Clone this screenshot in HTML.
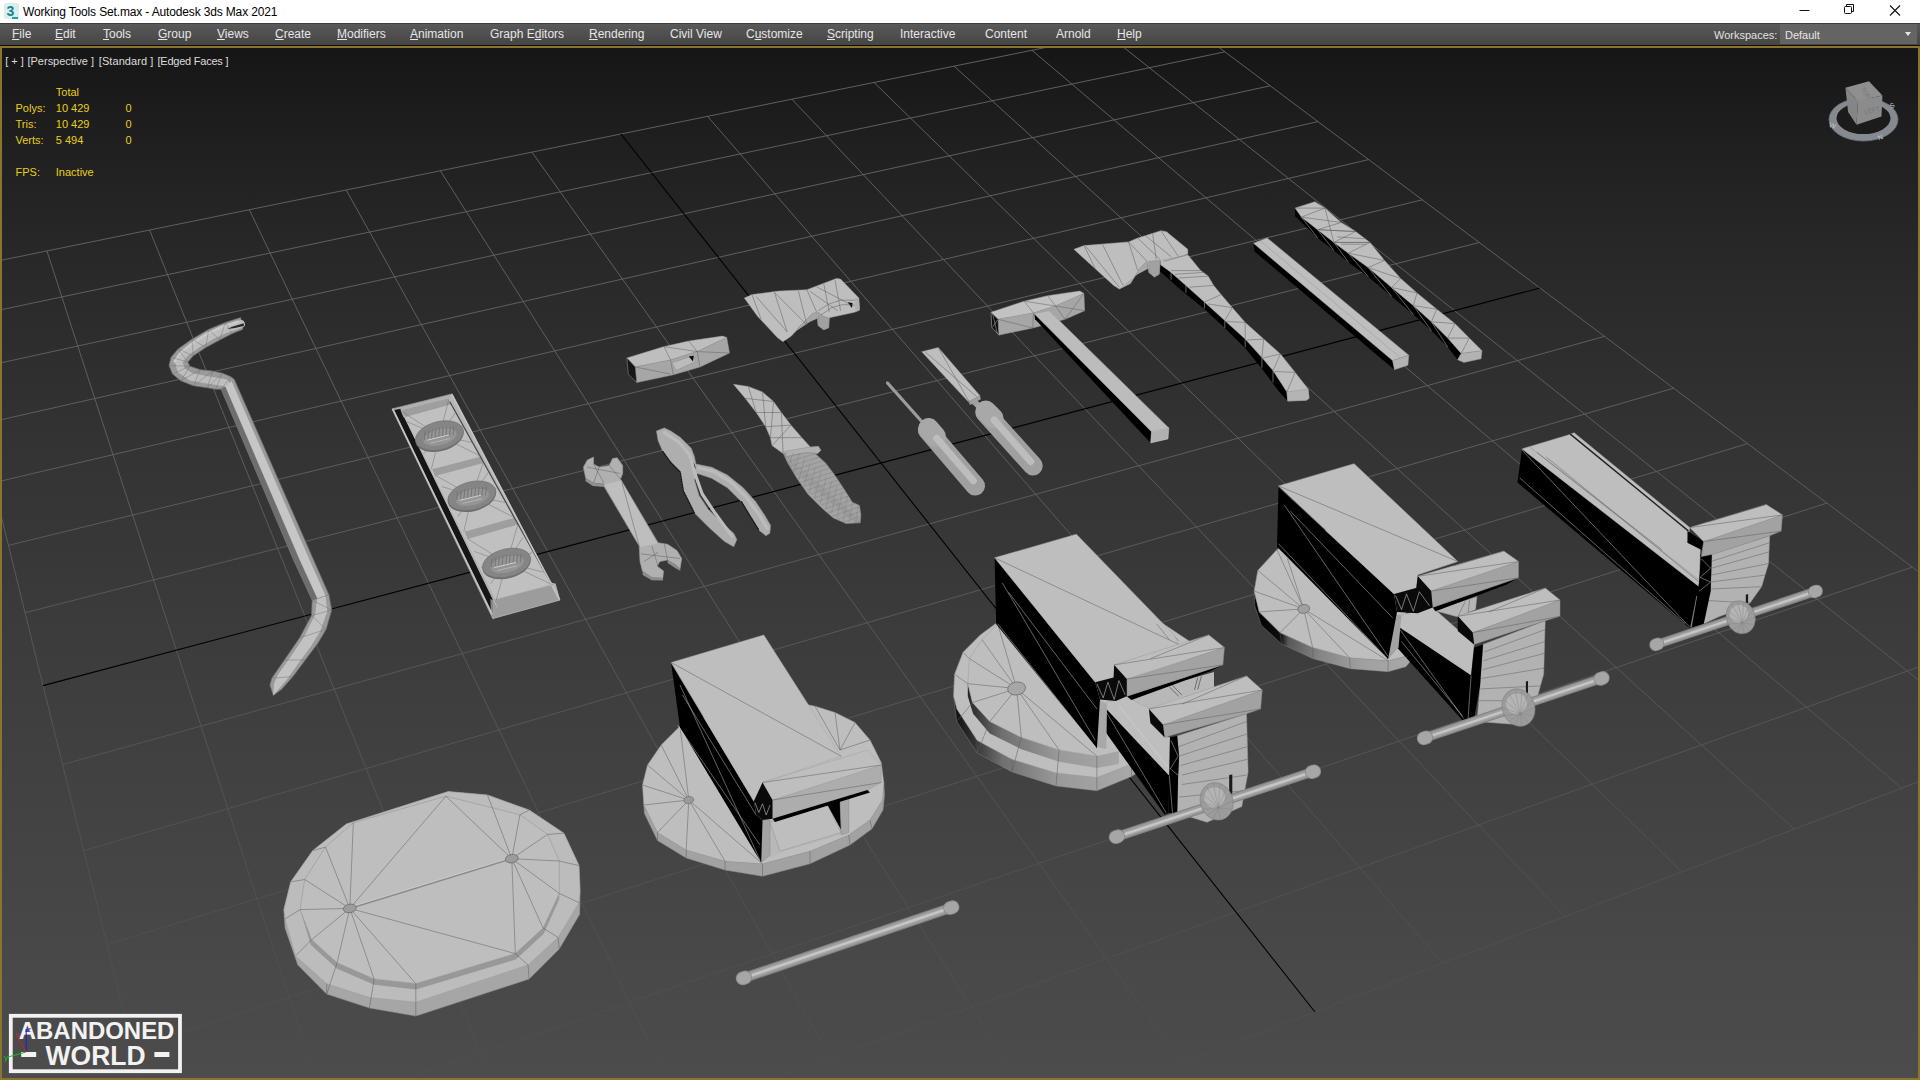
<!DOCTYPE html>
<html><head><meta charset="utf-8"><title>Working Tools Set.max - Autodesk 3ds Max 2021</title>
<style>
html,body{margin:0;padding:0;background:#fff;overflow:hidden}
body{width:1920px;height:1080px;position:relative;font-family:"Liberation Sans",sans-serif}
#title{position:absolute;left:0;top:0;width:1920px;height:23px;background:#fff;color:#000;font-size:12px}
#title .t{position:absolute;left:23px;top:5px;white-space:nowrap;letter-spacing:-0.15px}
#menu{position:absolute;left:0;top:23px;width:1920px;height:22px;background:linear-gradient(#3c3c3c 0,#3c3c3c 1px,#595959 1px,#464646 21px,#45484a 22px);border-bottom:1px solid #140e02;color:#e6e6e6;font-size:12px}
.mi{position:absolute;top:4px;white-space:nowrap}
.mi u{text-decoration:underline;text-underline-offset:1px}
#ws{position:absolute;left:1714px;top:6px;font-size:11px;color:#e0e0e0}
#dd{position:absolute;left:1780px;top:1px;width:137px;height:20px;background:#646464;font-size:11px;color:#e6e6e6}
#dd span{position:absolute;left:5px;top:5px}
#dd i{position:absolute;right:6px;top:8px;width:0;height:0;border-left:3.5px solid transparent;border-right:3.5px solid transparent;border-top:4.5px solid #e8e8e8}
#vp{position:absolute;left:0;top:46px;width:1920px;height:1034px;background:#8a752c}
#vp svg{position:absolute;left:0;top:-46px}
.lbl{position:absolute;white-space:nowrap;font-size:11px}
</style></head><body>
<div id="title">
<svg width="23" height="23" style="position:absolute;left:0;top:0"><rect x="4" y="3" width="15" height="16" rx="2" fill="#d9eeee"/><text x="6.5" y="16" font-family="Liberation Sans, sans-serif" font-weight="bold" font-size="14" fill="#17848c">3</text><rect x="12" y="17" width="6" height="2" fill="#19a3a3"/></svg>
<span class="t">Working Tools Set.max - Autodesk 3ds Max 2021</span>
<svg width="140" height="23" style="position:absolute;left:1780px;top:0" fill="none" stroke="#111" stroke-width="1"><path d="M19.5 10.5h10"/><rect x="64.5" y="6.5" width="7" height="7" rx="1"/><path d="M66.5 6.5v-2h7v7h-2"/><path d="M110 5.5l10 10M120 5.5l-10 10" stroke-width="1.1"/></svg>
</div>
<div id="menu"><span class="mi" style="left:12px"><u>F</u>ile</span><span class="mi" style="left:55px"><u>E</u>dit</span><span class="mi" style="left:103px"><u>T</u>ools</span><span class="mi" style="left:158px"><u>G</u>roup</span><span class="mi" style="left:217px"><u>V</u>iews</span><span class="mi" style="left:275px"><u>C</u>reate</span><span class="mi" style="left:337px"><u>M</u>odifiers</span><span class="mi" style="left:410px"><u>A</u>nimation</span><span class="mi" style="left:490px">Graph E<u>d</u>itors</span><span class="mi" style="left:589px"><u>R</u>endering</span><span class="mi" style="left:670px">Civil View</span><span class="mi" style="left:746px">C<u>u</u>stomize</span><span class="mi" style="left:827px"><u>S</u>cripting</span><span class="mi" style="left:900px">Interactive</span><span class="mi" style="left:985px">Content</span><span class="mi" style="left:1056px">Arnold</span><span class="mi" style="left:1117px"><u>H</u>elp</span><span id="ws">Workspaces:</span><div id="dd"><span>Default</span><i></i></div></div>
<div id="vp">
<svg width="1920" height="1080" viewBox="0 0 1920 1080" font-family="Liberation Sans, sans-serif">
<defs>
<linearGradient id="bg" x1="0" y1="0" x2="0" y2="1"><stop offset="0" stop-color="#161616"/><stop offset="0.05" stop-color="#1b1b1b"/><stop offset="0.1" stop-color="#202020"/><stop offset="0.15" stop-color="#242424"/><stop offset="0.2" stop-color="#282828"/><stop offset="0.25" stop-color="#2b2b2b"/><stop offset="0.3" stop-color="#2e2e2e"/><stop offset="0.35" stop-color="#313131"/><stop offset="0.4" stop-color="#343434"/><stop offset="0.45" stop-color="#363636"/><stop offset="0.5" stop-color="#383838"/><stop offset="0.55" stop-color="#3b3b3b"/><stop offset="0.6" stop-color="#3d3d3d"/><stop offset="0.65" stop-color="#3f3f3f"/><stop offset="0.7" stop-color="#414141"/><stop offset="0.75" stop-color="#434343"/><stop offset="0.8" stop-color="#454545"/><stop offset="0.85" stop-color="#474747"/><stop offset="0.9" stop-color="#494949"/><stop offset="0.95" stop-color="#4a4a4a"/><stop offset="1" stop-color="#4c4c4c"/></linearGradient>

<linearGradient id="gg" gradientUnits="userSpaceOnUse" x1="0" y1="48" x2="0" y2="1078"><stop offset="0" stop-color="#666"/><stop offset="0.35" stop-color="#626262"/><stop offset="0.63" stop-color="#585858"/><stop offset="0.83" stop-color="#505050"/><stop offset="1" stop-color="#4e4e4e"/></linearGradient>
<clipPath id="vc"><rect x="2" y="48" width="1916" height="1030"/></clipPath>
</defs>
<rect x="2" y="48" width="1916" height="1030" fill="url(#bg)"/>
<g clip-path="url(#vc)">
<path d="M-58.9 272.5L226.1 1427.4M-58.9 272.5L1182.0 19.7M46.9 250.9L406.3 1358.7M-47.2 319.9L1224.9 51.8M149.6 230.0L577.2 1293.4M-34.7 370.6L1270.2 85.8M249.3 209.7L739.6 1231.5M-21.3 424.8L1318.0 121.6M346.2 190.0L894.0 1172.6M-7.0 482.9L1368.6 159.6M440.3 170.8L1041.0 1116.5M8.4 545.4L1422.3 199.8M531.9 152.1L1181.2 1063.0M25.1 612.7L1479.3 242.5M707.6 116.4L1442.8 963.2M62.5 764.6L1604.6 336.4M791.9 99.2L1565.1 916.6M83.8 850.6L1673.6 388.2M874.0 82.4L1682.1 872.0M107.0 944.6L1747.5 443.6M954.0 66.1L1794.2 829.2M132.4 1047.7L1826.9 503.1M1032.0 50.3L1901.8 788.1M160.4 1161.4L1912.3 567.1M1108.0 34.8L2005.0 748.8M191.5 1287.2L2004.4 636.2M1182.0 19.7L2104.2 710.9M226.1 1427.4L2104.2 710.9" fill="none" stroke="url(#gg)" stroke-width="0.9"/>
<path d="M620.9 134.0L1315.0 1012.0M43.0 685.6L1539.9 288.0" fill="none" stroke="#000" stroke-width="1.1"/>
<polygon points="240.6,317.6 225.3,322.5 208.6,329.4 191.9,339.2 178.1,348.9 171.1,357.2 169,365.6 172.5,373.9 180.8,380.8 193.3,385.7 207.2,387.8 215.6,389.2 221.1,389.2 293.5,560 312.2,600.3 311.5,615.6 299.7,637.8 284.4,660 271.9,678.1 269.9,685 273.3,695.4 281.7,689.2 292.8,676.7 305.3,660 317.8,643.3 326.1,629.4 331.7,610 328.9,594.7 313.6,560 234.3,379.4 230.8,376.7 222.5,373.2 212.8,371.1 200.3,369.7 189.9,366.2 187.8,362.1 193.3,355.8 205.8,347.5 219.7,339.9 232.2,333.6 242.6,329.4 242.9,326.7 235,327.4 228.1,329.4 232.2,326 241.9,322.5" fill="#9a9a9a" stroke="#707070" stroke-width="0.7" stroke-linejoin="round"/>
<polygon points="221.1,389.2 225.06,386.26 299.53,560 317.21,598.62 312.2,600.3 293.5,560" fill="#6e6e6e"/>
<polygon points="225.324,386.064 231.66,381.36 309.58,560 325.56,595.82 317.544,598.508 299.932,560" fill="#c6c6c6"/>
<polygon points="317.21,598.62 315.136,614.592 304.452,636.288 290.412,656.994 277.912,674.842 274.022,683.506 273.3,695.4 287.762,678.526 297.952,663.982 310.452,646.974 320.292,631.248 327.256,611.232 325.56,595.82" fill="#c2c2c2"/>
<polyline points="241.2,323.9 225.3,329.4 212.8,335 198.9,343.3 185,353.1 178.8,361.4 180.8,369.7 190.6,376.7 204.4,379.4 215.6,381.1 225.3,382.9" fill="none" stroke="#bebebe" stroke-width="7.5" stroke-linecap="round" stroke-linejoin="round"/>
<polyline points="237.8,321.8 222.5,326.7 207.2,333.6 193.3,342.6 180.8,352.4 174.6,361.4" fill="none" stroke="#cacaca" stroke-width="2.5" stroke-linecap="round" stroke-linejoin="round"/>
<polygon points="243.8,323.3 232.9,326.4 226.9,329 233.6,328.2 243.8,326.1" fill="#272727"/>
<path d="M225.3 322.5 L232.2 333.6M208.6 329.4 L219.7 339.9M191.9 339.2 L205.8 347.5M178.1 348.9 L193.3 355.8M171.1 357.2 L187.8 362.1M169 365.6 L189.9 366.2M172.5 373.9 L189.9 366.2M180.8 380.8 L200.3 369.7M193.3 385.7 L212.8 371.1M207.2 387.8 L222.5 373.2M221.1 389.2 L230.8 376.7M225.3 322.5 L219.7 339.9M208.6 329.4 L205.8 347.5M191.9 339.2 L193.3 355.8M178.1 348.9 L187.8 362.1M180.8 380.8 L189.9 366.2M193.3 385.7 L200.3 369.7M207.2 387.8 L212.8 371.1M215.6 389.2 L222.5 373.2" fill="none" stroke="#707070" stroke-width="0.45"/>
<path d="M312.2 600.3 L328.9 594.7M311.5 615.6 L331.7 610M312.2 600.3 L331.7 610M311.5 615.6 L326.1 629.4M299.7 637.8 L326.1 629.4M271.9 678.1 L292.8 676.7M284.4 660 L305.3 660" fill="none" stroke="#707070" stroke-width="0.45"/>
<polygon points="392,408.9 452.2,393.9 559.9,600 492.7,618.5" fill="#b0b0b0" stroke="#a6a6a6" stroke-width="0.7" stroke-linejoin="round"/>
<polygon points="394.1,410.1 400.6,408.7 497.4,608.1 492.7,615.1" fill="#161616"/>
<polygon points="401.3,411.3 448.7,399.7 553,585 496.2,601.2" fill="#c0c0c0"/>
<polygon points="492.7,600 555.3,583.8 559.9,600 492.7,618.5" fill="#9c9c9c" stroke="#b4b4b4" stroke-width="0.6" stroke-linejoin="round"/>
<polygon points="490.4,598.9 492.7,600 492.7,618.5 490.9,611.6" fill="#8a8a8a"/>
<polygon points="400.6,410.6 448.7,398.5 451.5,404.3 403.6,417.5" fill="#9e9e9e"/>
<polygon points="432.1,469.2 481.2,456.4 484.4,462.7 435.3,475.9" fill="#9e9e9e"/>
<polygon points="464.5,531.7 514.7,517.8 518.2,524.5 467.7,539.1" fill="#9e9e9e"/>
<polygon points="448.7,399.7 452.2,393.9 559.9,600 555.3,583.8 549.5,581.9" fill="#b6b6b6"/>
<polyline points="450.1,402.2 550.2,581.9" fill="none" stroke="#4a4a4a" stroke-width="1.3" stroke-linecap="round" stroke-linejoin="round"/>
<polyline points="392.9,409.4 492,613.9" fill="none" stroke="#c4c4c4" stroke-width="1.5" stroke-linecap="round" stroke-linejoin="round"/>
<polyline points="452,394.8 559,598.9" fill="none" stroke="#c4c4c4" stroke-width="1.5" stroke-linecap="round" stroke-linejoin="round"/>
<polyline points="401,409.6 496.9,607" fill="none" stroke="#b8b8b8" stroke-width="1.0" stroke-linecap="round" stroke-linejoin="round"/>
<path d="M401.3 411.3 L439.5 435.6M448.7 399.7 L439.5 435.6M481.2 456.4 L439.5 435.6M431.4 469.2 L439.5 435.6M434.8 475 L471.9 495.8M483.5 462.2 L471.9 495.8M514.7 517.8 L471.9 495.8M463.8 531.7 L471.9 495.8M467.3 538.6 L506.6 563M518.2 523.6 L506.6 563M553 585 L506.6 563M496.2 600 L506.6 563M416.3 440.2 L439.5 435.6M462.6 426.3 L439.5 435.6M448.7 500.4 L471.9 495.8M496.2 488.8 L471.9 495.8M481.2 567.6 L506.6 563M532.1 552.5 L506.6 563M407.1 421.7 L439.5 435.6M423.3 454.1 L439.5 435.6M455.7 412.4 L439.5 435.6M471.9 442.5 L439.5 435.6M441.8 486.5 L471.9 495.8M458 516.6 L471.9 495.8M488.1 472.6 L471.9 495.8M506.6 502.7 L471.9 495.8M474.2 551.4 L506.6 563M490.4 583.8 L506.6 563M522.8 537.5 L506.6 563M543.7 572.2 L506.6 563" fill="none" stroke="#6a6a6a" stroke-width="0.45"/>
<ellipse cx="439.5" cy="437.1" rx="24.5" ry="14" fill="#6f6f6f" transform="rotate(-14 439.5 437.1)"/>
<ellipse cx="439.5" cy="435.6" rx="24.5" ry="14" fill="#858585" transform="rotate(-14 439.5 435.6)" stroke="#6c6c6c" stroke-width="0.6"/>
<ellipse cx="440" cy="437.1" rx="17" ry="8" fill="#959595" transform="rotate(-14 440 437.1)"/>
<path d="M425.1 431.2L424.3 440.0M428.7 430.3L427.9 439.4M432.3 429.4L431.5 438.8M435.9 428.5L435.1 438.2M439.5 427.6L438.7 437.6M443.1 427.3L442.3 437.0M446.7 427.0L445.9 436.4M450.3 426.7L449.5 435.8M453.9 426.4L453.1 435.2" stroke="#6a6a6a" stroke-width="0.7" fill="none"/>
<polyline points="427.5,440.1 448.5,435.1" fill="none" stroke="#d6d6d6" stroke-width="0.9" stroke-linecap="round" stroke-linejoin="round"/>
<polyline points="430.5,443.1 449.5,438.6" fill="none" stroke="#c2c2c2" stroke-width="0.7" stroke-linecap="round" stroke-linejoin="round"/>
<ellipse cx="471.9" cy="497.3" rx="24.5" ry="14" fill="#6f6f6f" transform="rotate(-14 471.9 497.3)"/>
<ellipse cx="471.9" cy="495.8" rx="24.5" ry="14" fill="#858585" transform="rotate(-14 471.9 495.8)" stroke="#6c6c6c" stroke-width="0.6"/>
<ellipse cx="472.4" cy="497.3" rx="17" ry="8" fill="#959595" transform="rotate(-14 472.4 497.3)"/>
<path d="M457.5 491.4L456.7 500.2M461.1 490.5L460.3 499.6M464.7 489.6L463.9 499.0M468.3 488.7L467.5 498.4M471.9 487.8L471.1 497.8M475.5 487.5L474.7 497.2M479.1 487.2L478.3 496.6M482.7 486.9L481.9 496.0M486.3 486.6L485.5 495.4" stroke="#6a6a6a" stroke-width="0.7" fill="none"/>
<polyline points="459.9,500.3 480.9,495.3" fill="none" stroke="#d6d6d6" stroke-width="0.9" stroke-linecap="round" stroke-linejoin="round"/>
<polyline points="462.9,503.3 481.9,498.8" fill="none" stroke="#c2c2c2" stroke-width="0.7" stroke-linecap="round" stroke-linejoin="round"/>
<ellipse cx="506.6" cy="564.5" rx="24.5" ry="14" fill="#6f6f6f" transform="rotate(-14 506.6 564.5)"/>
<ellipse cx="506.6" cy="563" rx="24.5" ry="14" fill="#858585" transform="rotate(-14 506.6 563)" stroke="#6c6c6c" stroke-width="0.6"/>
<ellipse cx="507.1" cy="564.5" rx="17" ry="8" fill="#959595" transform="rotate(-14 507.1 564.5)"/>
<path d="M492.2 558.6L491.4 567.4M495.8 557.7L495.0 566.8M499.4 556.8L498.6 566.2M503.0 555.9L502.2 565.6M506.6 555.0L505.8 565.0M510.2 554.7L509.4 564.4M513.8 554.4L513.0 563.8M517.4 554.1L516.6 563.2M521.0 553.8L520.2 562.6" stroke="#6a6a6a" stroke-width="0.7" fill="none"/>
<polyline points="494.6,567.5 515.6,562.5" fill="none" stroke="#d6d6d6" stroke-width="0.9" stroke-linecap="round" stroke-linejoin="round"/>
<polyline points="497.6,570.5 516.6,566" fill="none" stroke="#c2c2c2" stroke-width="0.7" stroke-linecap="round" stroke-linejoin="round"/>
<polygon points="583.4,467.2 587.3,460.1 593.6,457 593.6,464.1 599.1,467.2 609.3,465.6 612.5,458.6 617.2,457.8 622.7,465.6 622.7,473.5 620.4,479 621.9,481.4 658.1,542.7 667.6,544.3 677,550.6 681.7,558.5 680.1,568.7 675.4,564.8 667.6,560 659.7,561.6 657.3,566.3 663.6,571.1 662.8,578.1 651.8,577.4 642.4,571.1 640,561.6 639.2,545.9 603.8,486.1 603.8,483.7 593.6,482.9 585.7,478.2" fill="#b0b0b0" stroke="#9a9a9a" stroke-width="0.6" stroke-linejoin="round"/>
<polygon points="604.3,484.5 621.1,480.6 657.3,543.5 640,546.7" fill="#bebebe"/>
<polygon points="585.7,478.2 593.6,482.9 603.8,483.7 603.8,486.9 592.8,486.1 585.4,481.1" fill="#909090"/>
<polygon points="642.4,571.1 651.8,577.4 662.8,578.1 663.2,580.5 651.8,580.2 642.7,575" fill="#8c8c8c"/>
<polygon points="667.6,560 675.4,564.8 680.1,568.7 680.5,571.1 675.1,567.9 667.6,562.9" fill="#8c8c8c"/>
<path d="M621.9 482.2 L639.2 545.9M587.3 467.2 L620.4 473.5M593.6 464.1 L603.8 482.9M609.3 465.6 L620.4 479M599.1 467.2 L593.6 482.9M640.8 553.8 L680.1 558.5M651.8 545.9 L658.1 566.3M664.4 544.3 L667.6 560M644 561.6 L658.1 552.2" fill="none" stroke="#606060" stroke-width="0.5"/>
<polygon points="656.5,431 664.4,427.9 670.7,431 680.1,437.3 691.2,448.3 694.3,456.2 695.9,464.1 711.6,467.2 727.4,475.1 743.1,487.7 755.7,501.8 765.1,516 770.6,525.4 769.8,533.3 765.9,535.7 758.8,530.1 751,517.6 741.5,501.8 727.4,487.7 711.6,478.2 697.5,473.5 694.3,479.8 699,495.5 708.5,509.7 721.1,522.3 733.7,533.3 736.8,539.6 733.7,546.7 724.2,541.2 708.5,527 694.3,512.8 683.3,490.8 680.1,471.9 670.7,462.5 662.8,451.5 658.1,440.5" fill="#aeaeae" stroke="#989898" stroke-width="0.6" stroke-linejoin="round"/>
<polyline points="662.8,451.5 670.7,462.5 680.1,471.9 683.3,490.8 694.3,512.8" fill="none" stroke="#1a1a1a" stroke-width="1.4" stroke-linecap="round" stroke-linejoin="round" stroke-dasharray="1.6 1.2"/>
<polyline points="741.5,501.8 751,517.6 758.8,530.1" fill="none" stroke="#1a1a1a" stroke-width="1.4" stroke-linecap="round" stroke-linejoin="round" stroke-dasharray="1.6 1.2"/>
<polygon points="689.6,460.1 694.3,464.1 695.9,468.8 692,465.6" fill="#111"/>
<polyline points="664.4,432.6 678.6,442 689.6,454.6 694.3,471.9 702.2,494 714.8,512.8 732.1,536.4" fill="none" stroke="#bcbcbc" stroke-width="3.2" stroke-linecap="round" stroke-linejoin="round"/>
<polyline points="699,468 714.8,471.9 732.1,482.9 746.2,497.1 758.8,514.4 767.5,528.6" fill="none" stroke="#bcbcbc" stroke-width="3.2" stroke-linecap="round" stroke-linejoin="round"/>
<polygon points="626.9,357.9 664.1,346.6 688.8,341 722.5,336.1 726.7,337.5 697.2,351.6 670.5,360 635.3,367" fill="#bebebe" stroke="#9a9a9a" stroke-width="0.5" stroke-linejoin="round"/>
<polygon points="635.3,367 670.5,360 697.2,351.6 726.7,337.5 729.5,353 700,367 673.3,374.8 636.7,382.5" fill="#a6a6a6" stroke="#9a9a9a" stroke-width="0.5" stroke-linejoin="round"/>
<polygon points="626.9,357.9 635.3,367 636.7,382.5 628.3,374.1" fill="#161616" stroke="#999" stroke-width="0.5" stroke-linejoin="round"/>
<polygon points="671.9,362.8 693,355.8 695.8,361.4 676.1,370.5" fill="#bcbcbc" stroke="#8a8a8a" stroke-width="0.5" stroke-linejoin="round"/>
<polygon points="688.8,356.5 693.7,355.8 693,361.4" fill="#0a0a0a"/>
<path d="M664.1 346.6 L670.5 360M688.8 341 L697.2 351.6M670.5 360 L673.3 374.8M697.2 351.6 L700 367M635.3 367 L670.5 374.1M697.2 351.6 L729.5 353M664.1 346.6 L697.2 351.6" fill="none" stroke="#606060" stroke-width="0.5"/>
<polygon points="744.3,298.1 752,294.6 778.8,291.1 806.9,289.7 836.4,278.4 840.6,279.1 858.9,298.1 859.6,310.1 854.7,312.2 829.4,317.8 828.7,327.7 823.8,329.8 818.1,325.5 816.7,312.2 812.5,313.6 799.8,326.3 791.4,336.1 783,341.7 777.3,337.5 757.7,316.4" fill="#bebebe" stroke="#9c9c9c" stroke-width="0.5" stroke-linejoin="round"/>
<polygon points="816.7,312.2 812.5,313.6 799.8,326.3 791.4,336.1 797,330.5 809.7,322 817.4,318.5" fill="#a6a6a6"/>
<polygon points="818.1,312.2 823.8,316.4 828.7,317.8 828.7,327.7 823.8,329.8 818.1,325.5" fill="#a0a0a0" stroke="#888" stroke-width="0.5" stroke-linejoin="round"/>
<polygon points="847.7,302.3 852.6,303 851.9,308" fill="#0a0a0a"/>
<polygon points="854.7,298.1 858.9,298.1 859.6,310.1 855.4,311.9" fill="#b0b0b0"/>
<path d="M752 294.6 L761.2 319.5M756.3 296.7 L787.2 331.9M774.5 292.5 L787.2 331.9M774.5 292.5 L806.9 324.8M798.4 291.1 L806.9 324.8M806.9 289.7 L816.7 312.2M809.7 291.1 L837.8 310.8M816.7 286.9 L849.1 303.8M823.8 284.1 L829.4 312.2M835 279.8 L840.6 310.8M818.1 310.8 L829.4 303.8 L840.6 300.2 L854.7 300.2M820.9 315 L832.2 307.3 L843.4 304.5 L854.7 305.2" fill="none" stroke="#5c5c5c" stroke-width="0.5"/>
<polygon points="733.4,384.2 748.3,386.5 762.5,392 773.5,401.5 781.4,412.5 790.9,425.1 801.9,437.7 810.6,447.2 818.4,446.4 820.8,450.3 817.6,453.5 814.5,453.5 783,453.5 772,445.6 770.4,437.7 765.7,426.7 756.2,412.5 745.2,398.3" fill="#bebebe" stroke="#9c9c9c" stroke-width="0.5" stroke-linejoin="round"/>
<polygon points="783,452.7 814.5,453.1 825.5,462.9 835,475.5 844.4,489.7 852.3,502.3 859.4,505.4 860.9,514.9 860.2,522.8 846,523.5 833.4,518 822.4,508.6 808.2,494.4 797.2,478.7 787.7,462.9" fill="#a3a3a3" stroke="#8e8e8e" stroke-width="0.6" stroke-linejoin="round"/>
<polygon points="782.2,451.9 810.6,446.9 818.4,446.4 820.8,450.3 817.6,453.5 808.2,452.2 786.1,456.3" fill="#b0b0b0" stroke="#888" stroke-width="0.5" stroke-linejoin="round"/>
<path d="M745.2 398.3 L773.5 401.5M748.3 386.5 L756.2 412.5M756.2 412.5 L781.4 412.5M762.5 392 L765.7 426.7M765.7 426.7 L790.9 425.1M773.5 401.5 L770.4 437.7M770.4 437.7 L801.9 437.7M781.4 412.5 L783 451.9M772 445.6 L790.9 425.1" fill="none" stroke="#5c5c5c" stroke-width="0.5"/>
<clipPath id="kh"><polygon points="783,452.7 814.5,453.1 825.5,462.9 835,475.5 844.4,489.7 852.3,502.3 859.4,505.4 860.9,514.9 860.2,522.8 846,523.5 833.4,518 822.4,508.6 808.2,494.4 797.2,478.7 787.7,462.9"/></clipPath><g clip-path="url(#kh)">
<path d="M772.9 452.2 L814.5 439.6M776.4 456 L817.6 443.4M779.8 459.8 L820.8 447.2M783.3 463.5 L823.9 450.9M786.8 467.3 L827.1 454.7M790.2 471.1 L830.2 458.5M793.7 474.9 L833.4 462.3M797.2 478.7 L836.5 466.1M800.6 482.4 L839.7 469.8M804.1 486.2 L842.8 473.6M807.6 490 L846 477.4M811 493.8 L849.1 481.2M814.5 497.6 L852.3 485M818 501.3 L855.4 488.7M821.4 505.1 L858.6 492.5M824.9 508.9 L861.7 496.3M828.3 512.7 L864.9 500.1M831.8 516.5 L868 503.9M835.3 520.2 L871.2 507.6M838.7 524 L874.3 511.4M842.2 527.8 L877.5 515.2M845.7 531.6 L880.6 519M849.1 535.4 L883.8 522.8M852.6 539.1 L886.9 526.5M772.3 442.4 L782.7 462.9M777.6 447.2 L788.3 467.6M783 451.9 L794 472.4M788.3 456.6 L799.7 477.1M793.7 461.3 L805.4 481.8M799.1 466.1 L811 486.5M804.4 470.8 L816.7 491.3M809.8 475.5 L822.4 496M815.1 480.2 L828 500.7M820.5 485 L833.7 505.4M825.8 489.7 L839.4 510.2M831.2 494.4 L845 514.9M836.5 499.1 L850.7 519.6M841.9 503.9 L856.4 524.3M847.2 508.6 L862 529.1M852.6 513.3 L867.7 533.8M858 518 L873.4 538.5M863.3 522.8 L879.1 543.2M783.3 439.3 L774.8 466.1M788.7 444 L780.5 470.8M794 448.7 L786.1 475.5M799.4 453.5 L791.8 480.2M804.7 458.2 L797.5 485M810.1 462.9 L803.1 489.7M815.4 467.6 L808.8 494.4M820.8 472.4 L814.5 499.1M826.1 477.1 L820.2 503.9M831.5 481.8 L825.8 508.6M836.9 486.5 L831.5 513.3M842.2 491.3 L837.2 518M847.6 496 L842.8 522.8M852.9 500.7 L848.5 527.5M858.3 505.4 L854.2 532.2M863.6 510.2 L859.8 536.9M869 514.9 L865.5 541.7M874.3 519.6 L871.2 546.4" fill="none" stroke="#808080" stroke-width="0.45"/>
</g>
<polyline points="887.5,383 923.3,423.3" fill="none" stroke="#9c9c9c" stroke-width="3.2" stroke-linecap="round" stroke-linejoin="round"/>
<polyline points="927.5,430 975.3,485.8" fill="none" stroke="#a0a0a0" stroke-width="19.5" stroke-linecap="round" stroke-linejoin="round"/>
<polyline points="928.7,428.3 935.8,436.7" fill="none" stroke="#a8a8a8" stroke-width="20.5" stroke-linecap="round" stroke-linejoin="round"/>
<polyline points="936.7,438.3 973.3,480.8" fill="none" stroke="#bdbdbd" stroke-width="7" stroke-linecap="round" stroke-linejoin="round"/>
<polygon points="921.7,351.7 938.3,347.5 980,395.8 968.3,401.7" fill="#bebebe" stroke="#9a9a9a" stroke-width="0.5" stroke-linejoin="round"/>
<polygon points="968.3,401.7 980,395.8 980.8,399.2 970,405" fill="#a0a0a0"/>
<polyline points="974.2,401.7 985,411.7" fill="none" stroke="#a0a0a0" stroke-width="6" stroke-linecap="round" stroke-linejoin="round"/>
<polyline points="985,412.5 1033,465.8" fill="none" stroke="#a0a0a0" stroke-width="19.5" stroke-linecap="round" stroke-linejoin="round"/>
<polyline points="985.8,410.8 993.3,418.3" fill="none" stroke="#a8a8a8" stroke-width="20.5" stroke-linecap="round" stroke-linejoin="round"/>
<polyline points="994.2,420 1030.8,461.7" fill="none" stroke="#bdbdbd" stroke-width="7" stroke-linecap="round" stroke-linejoin="round"/>
<path d="M938.3 347.5 L970 403.3M925 351.7 L976.7 396.7" fill="none" stroke="#5c5c5c" stroke-width="0.5"/>
<polygon points="991,312.3 1024.1,301.2 1047.7,295.7 1079.9,291 1083.9,293.4 1055.5,306 1033.5,313 998.1,319.3" fill="#c2c2c2" stroke="#a0a0a0" stroke-width="0.5" stroke-linejoin="round"/>
<polygon points="998.1,319.3 1033.5,313 1055.5,306 1083.9,293.4 1084.6,310.7 1065,319.3 1032.7,328 998.9,335.1" fill="#a6a6a6" stroke="#a0a0a0" stroke-width="0.5" stroke-linejoin="round"/>
<polygon points="991,312.3 998.1,319.3 998.9,335.1 991.8,327.2" fill="#0c0c0c" stroke="#aaa" stroke-width="0.6" stroke-linejoin="round"/>
<path d="M992.6 313.8 L997.3 333.5M997.3 320.1 L992.6 327.2" fill="none" stroke="#bbb" stroke-width="0.5"/>
<path d="M1024.1 301.2 L1033.5 313M1047.7 295.7 L1055.5 306M1033.5 313 L1032.7 328M1055.5 306 L1065 319.3M1024.1 301.2 L1055.5 306M998.1 319.3 L1032.7 328M1055.5 306 L1084.6 310.7M1065 319.3 L1083.9 293.4M1049.2 311.5 L1168 428.7" fill="none" stroke="#606060" stroke-width="0.5"/>
<polygon points="1034.3,313.8 1151.5,431.8 1150.7,442.9 1035.1,319.3" fill="#000"/>
<polygon points="1034.3,313.8 1049.2,310.7 1168.8,427.9 1151.5,431.8" fill="#bcbcbc" stroke="#a0a0a0" stroke-width="0.5" stroke-linejoin="round"/>
<polygon points="1151.5,431.8 1168.8,427.9 1168,438.9 1150.7,442.9" fill="#b0b0b0" stroke="#ccc" stroke-width="0.5" stroke-linejoin="round"/>
<polygon points="1160.9,265 1171.1,272.4 1185.9,285.4 1204.4,302 1224.8,320.6 1245.2,339.1 1261.9,357.6 1273,370.6 1286.9,391.9 1287.8,401.1 1278.5,390.9 1261.9,368.7 1245.2,348.3 1224.8,328 1202.6,307.6 1182.2,290.9 1160,271.5" fill="#000"/>
<polygon points="1160,257.6 1178.5,253.9 1187.8,254.8 1200.7,270.6 1208.1,276.1 1213.7,285.4 1221.1,294.6 1232.2,307.6 1245.2,322.4 1263.7,339.1 1280.4,353.9 1295.2,372.4 1308.1,389.1 1309.1,398.3 1306.3,400.2 1287.8,401.1 1286.9,391.9 1273,370.6 1261.9,357.6 1245.2,339.1 1224.8,320.6 1204.4,302 1185.9,285.4 1171.1,272.4 1160.9,265" fill="#bebebe" stroke="#a0a0a0" stroke-width="0.5" stroke-linejoin="round"/>
<polygon points="1286.9,391.9 1308.1,389.1 1309.1,398.3 1306.3,400.2 1287.8,401.1" fill="#b4b4b4" stroke="#999" stroke-width="0.5" stroke-linejoin="round"/>
<polygon points="1073.9,249.3 1084.1,245.6 1128.5,241.9 1137.8,238.1 1160.9,230.7 1166.5,231.7 1187.8,249.3 1187.8,253.9 1178.5,256.7 1160,260.4 1159.1,274.3 1154.4,277 1148.9,272.4 1147,261.3 1139.6,268.7 1130.4,283.5 1119.3,289.1 1113.7,285.4 1095.2,268.7" fill="#bebebe" stroke="#a0a0a0" stroke-width="0.5" stroke-linejoin="round"/>
<polygon points="1147,261.3 1139.6,268.7 1130.4,283.5 1119.3,289.1 1124.8,284.4 1137.8,274.3 1148,268.7" fill="#a8a8a8"/>
<polygon points="1148.9,261.3 1160,260.4 1159.1,274.3 1154.4,277 1148.9,272.4" fill="#a2a2a2" stroke="#888" stroke-width="0.5" stroke-linejoin="round"/>
<path d="M1084.1 245.6 L1095.2 268.7M1085.9 246.5 L1119.3 287.2M1102.6 244.6 L1123 285.4M1128.5 241.9 L1137.8 270.6M1128.5 241.9 L1147 261.3M1137.8 238.1 L1160 259.4M1145.2 235.4 L1171.1 256.7M1160.9 230.7 L1178.5 256.7M1152.6 233.5 L1156.3 259.4M1163.7 261.3 L1187.8 254.8M1171.1 270.6 L1200.7 270.6M1178.5 278 L1208.1 276.1M1174.8 274.3 L1204.4 272.4M1189.6 287.2 L1213.7 285.4M1204.4 302 L1221.1 294.6M1208.1 303.9 L1232.2 307.6M1224.8 320.6 L1232.2 307.6M1226.7 321.5 L1245.2 322.4M1245.2 339.1 L1245.2 322.4M1247 340 L1263.7 339.1M1261.9 357.6 L1263.7 339.1M1262.8 358 L1280.4 353.9M1273 370.6 L1280.4 353.9M1274.8 371.5 L1295.2 372.4M1286.9 391.9 L1295.2 372.4" fill="none" stroke="#5c5c5c" stroke-width="0.5"/>
<path d="M1171.1 272.4 L1171.1 279.8M1185.9 285.4 L1185.9 292.8M1204.4 302 L1204.4 308.5M1224.8 320.6 L1224.8 328M1245.2 339.1 L1245.2 347.4M1261.9 357.6 L1261.9 367.8M1273 370.6 L1273 382.6" fill="none" stroke="#c2c2c2" stroke-width="0.5"/>
<polygon points="1253.5,243.3 1392.6,360.6 1394.4,369.7 1254.4,251.4" fill="#000"/>
<polygon points="1253.5,243.3 1267.1,237.9 1408.8,355.2 1392.6,360.6" fill="#bebebe" stroke="#a0a0a0" stroke-width="0.5" stroke-linejoin="round"/>
<polygon points="1392.6,360.6 1408.8,355.2 1407.9,365.2 1394.4,369.7" fill="#b2b2b2" stroke="#999" stroke-width="0.5" stroke-linejoin="round"/>
<path d="M1259.9 240.6 L1400.7 357.9" fill="none" stroke="#9a9a9a" stroke-width="0.5"/>
<polygon points="1295.1,208.1 1301.4,217.1 1317.6,229.7 1333.9,242.4 1348.3,253.2 1368.2,267.6 1391.7,287.5 1413.3,305.6 1431.4,321.8 1447.7,338.1 1461.2,353.4 1457.6,359.7 1447.7,347.1 1431.4,330.8 1413.3,314.6 1391.7,296.5 1368.2,276.7 1348.3,262.2 1333.9,250.5 1317.6,237.9 1295.1,216.2" fill="#000"/>
<polygon points="1295.1,208.1 1301.4,217.1 1317.6,229.7 1333.9,242.4 1348.3,253.2 1368.2,267.6 1391.7,287.5 1413.3,305.6 1431.4,321.8 1447.7,338.1 1461.2,353.4 1482,350.7 1469.3,338.1 1454.9,323.6 1436.8,309.2 1417,292.9 1400.7,278.5 1384.5,260.4 1370,242.4 1355.6,231.5 1341.1,222.5 1324.9,208.1 1314.9,201.7" fill="#bebebe" stroke="#a0a0a0" stroke-width="0.5" stroke-linejoin="round"/>
<polygon points="1461.2,353.4 1482,350.7 1481.1,358.8 1463.9,362.4 1457.6,359.7" fill="#b2b2b2" stroke="#999" stroke-width="0.5" stroke-linejoin="round"/>
<path d="M1295.1 208.1 L1324.9 208.1M1301.4 217.1 L1324.9 208.1M1301.4 217.1 L1341.1 222.5M1317.6 229.7 L1341.1 222.5M1317.6 229.7 L1355.6 231.5M1333.9 242.4 L1355.6 231.5M1333.9 242.4 L1370 242.4M1348.3 253.2 L1370 242.4M1348.3 253.2 L1384.5 260.4M1368.2 267.6 L1384.5 260.4M1368.2 267.6 L1400.7 278.5M1391.7 287.5 L1400.7 278.5M1391.7 287.5 L1417 292.9M1413.3 305.6 L1417 292.9M1413.3 305.6 L1436.8 309.2M1431.4 321.8 L1436.8 309.2M1431.4 321.8 L1454.9 323.6M1447.7 338.1 L1454.9 323.6M1447.7 338.1 L1469.3 338.1M1461.2 353.4 L1469.3 338.1M1317.6 229.7 L1355.6 231.5M1324.9 208.1 L1333.9 242.4M1333.9 242.4 L1370 242.4M1337.5 236.9 L1366.4 238.8M1341.1 244.2 L1366.4 244.2" fill="none" stroke="#5c5c5c" stroke-width="0.5"/>
<path d="M1301.4 217.1 L1317.6 237.9M1317.6 229.7 L1333.9 250.5M1333.9 242.4 L1348.3 262.2M1348.3 253.2 L1368.2 276.7M1368.2 267.6 L1391.7 296.5M1391.7 287.5 L1413.3 314.6M1413.3 305.6 L1431.4 330.8M1431.4 321.8 L1447.7 347.1" fill="none" stroke="#c2c2c2" stroke-width="0.5"/>
<polygon points="643.8,805 657.5,832.5 686.2,850 725,861.2 762.5,863.8 810,851.2 848.8,835 870,820 882.5,800 883.8,782.5 884.5,795 883,810 872,828.8 850,845 810,863.8 762.5,876.2 725,870 686.2,858 657.5,840.5 644.5,813.8" fill="#a2a2a2" stroke="#8e8e8e" stroke-width="0.5" stroke-linejoin="round"/>
<polygon points="680,726.2 661.2,745 647.5,765 642.5,785 643.8,805 657.5,832.5 686.2,850 725,861.2 762.5,863.8 810,851.2 848.8,835 870,820 882.5,800 883.8,782.5 881.2,762.5 870,740 855,722.5 835,712.5 815,706.2 760,695" fill="#bebebe" stroke="#a0a0a0" stroke-width="0.5" stroke-linejoin="round"/>
<path d="M688.8 800 L661.2 745M688.8 800 L647.5 765M688.8 800 L642.5 785M688.8 800 L643.8 805M688.8 800 L657.5 832.5M688.8 800 L686.2 850M688.8 800 L725 861.2M688.8 800 L762.5 863.8M688.8 800 L680 726.2M840 750 L835 712.5M840 750 L855 722.5M840 750 L870 740M840 750 L815 706.2M657.5 832.5 L657.5 840.5M686.2 850 L686.2 858M725 861.2 L725 870M762.5 863.8 L762.5 876.2M810 851.2 L810 863.8M848.8 835 L850 845M870 820 L872 828.8" fill="none" stroke="#5c5c5c" stroke-width="0.5"/>
<ellipse cx="688.8" cy="800" rx="5" ry="3.6" fill="#9a9a9a" transform="rotate(-10 688.8 800)" stroke="#606060" stroke-width="0.5"/>
<polygon points="762.5,817.5 848.8,792.5 848.8,832.5 780,852.5 761.2,862.5" fill="#b8b8b8"/>
<polygon points="770,822.5 827.5,805 841.2,832.5 780,851.2" fill="#bebebe" stroke="#909090" stroke-width="0.5" stroke-linejoin="round"/>
<polygon points="827.5,805 840,800 841.2,830" fill="#000"/>
<polygon points="762.5,820 770,820 770,855 761.2,862.5" fill="#a4a4a4" stroke="#8a8a8a" stroke-width="0.5" stroke-linejoin="round"/>
<polygon points="840,798.8 848.8,795 848.8,832.5 841.2,835" fill="#a8a8a8" stroke="#8a8a8a" stroke-width="0.5" stroke-linejoin="round"/>
<polygon points="671.2,663.8 753.8,801.2 756.2,815 762.5,820 761.2,862.5 680,727.5" fill="#000"/>
<polygon points="671.2,662.5 763.8,635 841.2,756.2 762.5,782.5 762.5,797.5 753.8,801.2" fill="#bebebe" stroke="#a8a8a8" stroke-width="0.5" stroke-linejoin="round"/>
<path d="M671.2 662.5 L841.2 756.2" fill="none" stroke="#5c5c5c" stroke-width="0.5"/>
<path d="M680 685 L760 860M682.5 695 L756.2 815M677.5 725 L760 845" fill="none" stroke="#dcdcdc" stroke-width="0.45"/>
<polygon points="772.5,800 881.2,765 881.2,782.5 867.5,790 772.5,818.8" fill="#adadad" stroke="#999" stroke-width="0.5" stroke-linejoin="round"/>
<polygon points="762.5,782.5 867.5,750 881.2,765 772.5,800" fill="#bebebe" stroke="#a0a0a0" stroke-width="0.5" stroke-linejoin="round"/>
<polygon points="753.8,801.2 762.5,782.5 772.5,800 772.5,818.8 762.5,820 756.2,815" fill="#0a0a0a"/>
<path d="M755 802.5 L758.8 812.5 L762.5 803.8 L766.2 815 L770 805" fill="none" stroke="#e0e0e0" stroke-width="0.5"/>
<polygon points="772.5,818.8 867.5,790 870,792.5 775,822" fill="#000"/>
<path d="M762.5 782.5 L881.2 765M772.5 800 L881.2 782.5" fill="none" stroke="#5c5c5c" stroke-width="0.5"/>
<polygon points="448.2,791.6 487.5,795 529.2,810.1 563.9,833.2 579,865.6 580.1,891.1 579.7,914.2 559.3,948.9 529.2,979 415.8,1016.1 369.5,1008 326.7,994.1 297.8,965.1 285,928.1 283.9,909.6 290.8,881.8 312.8,850.6 346.4,824" fill="#a6a6a6" stroke="#909090" stroke-width="0.5" stroke-linejoin="round"/>
<polygon points="448.2,791.6 487.5,795 529.2,810.1 563.9,833.2 579,865.6 580.1,891.1 579,902.7 558.1,937.4 528,965.1 415.8,1002.2 369.5,997.5 326.7,983.7 295.5,955.9 285,918.9 283.9,909.6 290.8,881.8 312.8,850.6 346.4,824" fill="#bcbcbc" stroke="#9a9a9a" stroke-width="0.5" stroke-linejoin="round"/>
<polygon points="300.1,909.6 311.7,939.7 337.1,962.8 374.1,979 415.8,983.7 515.3,953.6 543.1,928.1 559.3,893.4 559.3,899.2 543.5,933.9 515.8,959.4 415.8,989.4 374.1,984.8 336.7,968.6 310.7,944.8" fill="#989898"/>
<polygon points="353.3,822.8 445.9,796.2 519.9,814.7 547.7,834.4 559.3,861 559.3,893.4 543.1,928.1 515.3,953.6 415.8,983.7 374.1,979 337.1,962.8 311.7,939.7 300.1,909.6 304.7,879.5 325.5,847.1" fill="#bebebe" stroke="#8e8e8e" stroke-width="0.5" stroke-linejoin="round"/>
<path d="M349.8 908.4 L353.3 822.8M349.8 908.4 L325.5 847.1M349.8 908.4 L304.7 879.5M349.8 908.4 L300.1 909.6M349.8 908.4 L311.7 939.7M349.8 908.4 L337.1 962.8M349.8 908.4 L374.1 979M349.8 908.4 L415.8 983.7M349.8 908.4 L515.3 953.6M349.8 908.4 L445.9 796.2M511.8 858.7 L445.9 796.2M511.8 858.7 L519.9 814.7M511.8 858.7 L547.7 834.4M511.8 858.7 L559.3 861M511.8 858.7 L559.3 893.4M511.8 858.7 L543.1 928.1M511.8 858.7 L515.3 953.6M511.8 858.7 L487.5 795M415.8 983.7 L415.8 1016.1M515.3 953.6 L528 965.1M374.1 979 L369.5 1008M337.1 962.8 L326.7 994.1M311.7 939.7 L295.5 955.9M300.1 909.6 L285 918.9M304.7 879.5 L290.8 881.8M325.5 847.1 L312.8 850.6M559.3 893.4 L579 902.7M559.3 861 L579 865.6M547.7 834.4 L563.9 833.2M519.9 814.7 L529.2 810.1M543.1 928.1 L558.1 937.4M528 965.1 L529.2 979M558.1 937.4 L559.3 948.9M326.7 983.7 L326.7 994.1" fill="none" stroke="#5c5c5c" stroke-width="0.5"/>
<polyline points="349.8,908.4 511.8,858.7" fill="none" stroke="#8a8a8a" stroke-width="1.6" stroke-linecap="round" stroke-linejoin="round"/>
<polyline points="351,906.8 511.8,857.3" fill="none" stroke="#d2d2d2" stroke-width="0.6" stroke-linecap="round" stroke-linejoin="round"/>
<ellipse cx="349.8" cy="908.4" rx="6.5" ry="4.2" fill="#9c9c9c" transform="rotate(-10 349.8 908.4)" stroke="#5c5c5c" stroke-width="0.6"/>
<ellipse cx="511.8" cy="858.7" rx="6.5" ry="4.2" fill="#9c9c9c" transform="rotate(-10 511.8 858.7)" stroke="#5c5c5c" stroke-width="0.6"/>
<polyline points="739.6,979.4 955.6,906.2" fill="none" stroke="#858585" stroke-width="10.1" stroke-linecap="butt" stroke-linejoin="round"/>
<polyline points="739.6,979.4 955.6,906.2" fill="none" stroke="#a6a6a6" stroke-width="7.3" stroke-linecap="butt" stroke-linejoin="round"/>
<polyline points="739.6,979.4 955.6,906.2" fill="none" stroke="#c6c6c6" stroke-width="2.375" stroke-linecap="butt" stroke-linejoin="round"/>
<polyline points="738.746,976.881 954.746,903.681" fill="none" stroke="#8e8e8e" stroke-width="0.5" stroke-linecap="butt" stroke-linejoin="round"/>
<polyline points="740.515,982.099 956.515,908.899" fill="none" stroke="#8e8e8e" stroke-width="0.5" stroke-linecap="butt" stroke-linejoin="round"/>
<polyline points="742.678,978.357 745.14,977.522" fill="none" stroke="#8a8a8a" stroke-width="13.8" stroke-linecap="round" stroke-linejoin="round"/>
<polyline points="742.678,978.357 745.14,977.522" fill="none" stroke="#a6a6a6" stroke-width="12" stroke-linecap="round" stroke-linejoin="round"/>
<polyline points="952.522,907.243 950.06,908.078" fill="none" stroke="#8a8a8a" stroke-width="13.8" stroke-linecap="round" stroke-linejoin="round"/>
<polyline points="952.522,907.243 950.06,908.078" fill="none" stroke="#a6a6a6" stroke-width="12" stroke-linecap="round" stroke-linejoin="round"/>
<defs><linearGradient id="sg1" gradientUnits="userSpaceOnUse" x1="953" y1="0" x2="1130" y2="0"><stop offset="0" stop-color="#0c0c0c"/><stop offset="0.1" stop-color="#2c2c2c"/><stop offset="0.28" stop-color="#707070"/><stop offset="0.6" stop-color="#9a9a9a"/><stop offset="1" stop-color="#a8a8a8"/></linearGradient><linearGradient id="sg2" gradientUnits="userSpaceOnUse" x1="1254" y1="0" x2="1410" y2="0"><stop offset="0" stop-color="#000"/><stop offset="0.17" stop-color="#0e0e0e"/><stop offset="0.22" stop-color="#585858"/><stop offset="0.42" stop-color="#858585"/><stop offset="0.7" stop-color="#a0a0a0"/><stop offset="1" stop-color="#a8a8a8"/></linearGradient></defs>
<polygon points="997.7,622.3 980.4,634.9 963.1,652.3 954.6,674.3 953.6,696.3 956.8,721.5 977.2,753 1011.9,771.9 1056,786.1 1096.9,790.8 1131.5,776.6 1156.7,759.3 1181.9,708.9 1191.4,642.8 1163,623.9" fill="url(#sg1)" stroke="#8a8a8a" stroke-width="0.4" stroke-linejoin="round"/>
<polygon points="997.7,622.3 980.4,634.9 963.1,652.3 954.6,674.3 953.6,696.3 956.8,708.9 977.2,740.4 1011.9,759.3 1056,772.9 1096.9,777.6 1131.5,764 1156.7,746.7 1181.9,708.9 1191.4,642.8 1163,623.9" fill="#bebebe" stroke="#9a9a9a" stroke-width="0.5" stroke-linejoin="round"/>
<polygon points="967.8,683.7 972.5,702.6 989.8,721.5 1021.3,737.3 1059.1,749.9 1096.9,756.2 1118.9,751.5 1118.9,764 1096.9,768.1 1059.1,761.8 1021.3,749.2 989.8,733.5 973.1,713.7 967.8,696.3" fill="url(#sg1)"/>
<polygon points="997.7,623.9 982,639.7 969.4,658.6 967.8,683.7 972.5,702.6 989.8,721.5 1021.3,737.3 1059.1,749.9 1096.9,756.2 1118.9,751.5 1181.9,708.9 1191.4,642.8 1163,623.9" fill="#bebebe" stroke="#9a9a9a" stroke-width="0.5" stroke-linejoin="round"/>
<path d="M1016.6 688.5 L997.7 623.9M1016.6 688.5 L982 639.7M1016.6 688.5 L969.4 658.6M1016.6 688.5 L967.8 683.7M1016.6 688.5 L972.5 702.6M1016.6 688.5 L989.8 721.5M1016.6 688.5 L1021.3 737.3M1016.6 688.5 L1059.1 749.9M1016.6 688.5 L1096.9 756.2M967.8 683.7 L954.6 674.3M969.4 658.6 L963.1 652.3M972.5 702.6 L956.8 721.5M989.8 721.5 L977.2 753M1021.3 737.3 L1011.9 771.9M1059.1 749.9 L1056 786.1M1096.9 756.2 L1096.9 790.8M977.2 740.4 L977.2 753M1011.9 759.3 L1011.9 771.9M1131.5 764 L1131.5 776.6" fill="none" stroke="#5c5c5c" stroke-width="0.5"/>
<ellipse cx="1016.6" cy="688.5" rx="9" ry="6.5" fill="#a6a6a6" transform="rotate(-10 1016.6 688.5)" stroke="#5c5c5c" stroke-width="0.6"/>
<path d="M1169.3 630.2 L1178.8 641.2M1164.6 627.1 L1172.5 634.9" fill="none" stroke="#5c5c5c" stroke-width="0.5"/>
<polygon points="1125.6,697.3 1214,672.1 1214,687.5 1150.1,708.3" fill="#b8b8b8"/>
<path d="M1169.3 686.9 L1178.8 696.3M1172.5 685.3 L1181.9 695.1M1197.7 677.5 L1194.5 690M1201.4 676.2 L1197.7 689.4" fill="none" stroke="#4a4a4a" stroke-width="0.7"/>
<polygon points="1177.2,736 1246.5,713.7 1248.1,771.9 1241.8,806.6 1207.1,822.3 1177.2,812.9 1178.1,776 1179.1,756.8" fill="#b2b2b2" stroke="#999" stroke-width="0.5" stroke-linejoin="round"/>
<path d="M1178.8 746.7 L1246.5 721.5M1178.8 756.2 L1246.5 734.1M1180.3 765.6 L1247.4 746.7M1181.9 775.1 L1247.4 759.3M1181.9 784.5 L1246.5 775.1M1178.8 797.1 L1243.3 790.8" fill="none" stroke="#606060" stroke-width="0.5"/>
<polygon points="1229.2,775.1 1232.3,774.4 1232.3,794 1229.2,794.6" fill="#1a1a1a"/>
<polygon points="1106.3,702.6 1125.2,696.3 1150.4,708.9 1150.4,723.1 1164.6,737.3 1170,737.3 1169.3,776 1106.3,708.9" fill="#bebebe" stroke="#a0a0a0" stroke-width="0.5" stroke-linejoin="round"/>
<polygon points="1106.3,708.9 1169.3,776 1168.4,812.9 1164.6,814.4 1105.1,731.6" fill="#000"/>
<polygon points="1170,737.3 1177.2,736 1179.1,756.8 1178.1,776 1177.2,812.9 1168.4,812.9 1169.3,776" fill="#000"/>
<polygon points="1096.3,698.2 1107,704.2 1106.3,748.9 1096.6,746.7" fill="#a8a8a8"/>
<path d="M1106.3 712.1 L1166.2 812.9M1169.3 776 L1172.5 812.9M1170.9 740.4 L1178.1 756.2 L1170.3 768.8 L1178.1 775.1M1118.9 705.8 L1169.3 768.8" fill="none" stroke="#dcdcdc" stroke-width="0.45"/>
<polygon points="994.6,557.8 1095.3,682.2 1100,699.5 1096.9,748.3 996.1,623.9" fill="#000"/>
<polygon points="994.6,557.8 1076.4,534.2 1174,634.9 1178.8,644.4 1114.2,664.9 1113.6,677.5 1095.3,682.2" fill="#bebebe" stroke="#a8a8a8" stroke-width="0.5" stroke-linejoin="round"/>
<path d="M994.6 557.8 L1178.8 644.4M1156.7 623.9 L1169.3 639.7" fill="none" stroke="#5c5c5c" stroke-width="0.5"/>
<path d="M1002.4 583 L1095.3 740.4M1008.7 592.4 L1096.9 708.9M997.7 623.9 L1095.3 746.7" fill="none" stroke="#dcdcdc" stroke-width="0.45"/>
<polygon points="1126.8,696.3 1222.9,664.9 1210.3,671.2 1131.5,700.1" fill="#000"/>
<polygon points="1126.8,679 1224.4,647.5 1222.9,664.9 1126.8,696.3" fill="#a2a2a2" stroke="#8a8a8a" stroke-width="0.5" stroke-linejoin="round"/>
<polygon points="1114.2,664.9 1208.7,634.9 1224.4,647.5 1126.8,679" fill="#bebebe" stroke="#a0a0a0" stroke-width="0.5" stroke-linejoin="round"/>
<polygon points="1095.3,682.2 1113.6,677.5 1114.2,664.9 1126.8,679 1126.8,696.3 1115.8,701.1 1100,699.5" fill="#0a0a0a"/>
<path d="M1096.9 683.7 L1103.2 697.9 L1107.9 682.2 L1114.2 699.5 L1118.9 680.6 L1125.2 694.8" fill="none" stroke="#e0e0e0" stroke-width="0.5"/>
<path d="M1114.2 664.9 L1224.4 647.5M1126.8 679 L1222.9 664.9M1150.4 658.6 L1208.7 634.9" fill="none" stroke="#5c5c5c" stroke-width="0.5"/>
<polygon points="1163,724.7 1262.2,690 1260.6,708.9 1246.5,713.7 1164.6,737.3" fill="#a2a2a2" stroke="#8a8a8a" stroke-width="0.5" stroke-linejoin="round"/>
<polygon points="1148.9,708.9 1246.5,675.9 1262.2,690 1163,724.7" fill="#bebebe" stroke="#a0a0a0" stroke-width="0.5" stroke-linejoin="round"/>
<polygon points="1148.9,708.9 1163,724.7 1164.6,737.3 1150.4,723.1" fill="#0a0a0a"/>
<path d="M1148.9 708.9 L1262.2 690M1163 724.7 L1260.6 708.9M1181.9 704.2 L1246.5 675.9" fill="none" stroke="#5c5c5c" stroke-width="0.5"/>
<polyline points="1112.6,838.1 1317.3,770.3" fill="none" stroke="#858585" stroke-width="9.6" stroke-linecap="butt" stroke-linejoin="round"/>
<polyline points="1112.6,838.1 1317.3,770.3" fill="none" stroke="#a6a6a6" stroke-width="6.8" stroke-linecap="butt" stroke-linejoin="round"/>
<polyline points="1112.6,838.1 1317.3,770.3" fill="none" stroke="#c6c6c6" stroke-width="2.25" stroke-linecap="butt" stroke-linejoin="round"/>
<polyline points="1111.81,835.708 1316.51,767.908" fill="none" stroke="#8e8e8e" stroke-width="0.5" stroke-linecap="butt" stroke-linejoin="round"/>
<polyline points="1113.45,840.663 1318.15,772.863" fill="none" stroke="#8e8e8e" stroke-width="0.5" stroke-linecap="butt" stroke-linejoin="round"/>
<polyline points="1115.69,837.078 1118.15,836.261" fill="none" stroke="#8a8a8a" stroke-width="13.8" stroke-linecap="round" stroke-linejoin="round"/>
<polyline points="1115.69,837.078 1118.15,836.261" fill="none" stroke="#a6a6a6" stroke-width="12" stroke-linecap="round" stroke-linejoin="round"/>
<polyline points="1314.21,771.322 1311.75,772.139" fill="none" stroke="#8a8a8a" stroke-width="13.8" stroke-linecap="round" stroke-linejoin="round"/>
<polyline points="1314.21,771.322 1311.75,772.139" fill="none" stroke="#a6a6a6" stroke-width="12" stroke-linecap="round" stroke-linejoin="round"/>
<ellipse cx="1216.6" cy="801.36" rx="16.15" ry="19.04" fill="#9c9c9c" transform="rotate(-20 1216.6 801.36)" stroke="#7e7e7e" stroke-width="0.6"/>
<ellipse cx="1214.56" cy="797.45" rx="10.54" ry="10.2" fill="#b4b4b4" transform="rotate(-20 1214.56 797.45)"/>
<path d="M1218.3 807.6L1232.4 801.4M1218.3 807.6L1230.8 809.3M1218.3 807.6L1226.5 815.7M1218.3 807.6L1220.1 819.3M1218.3 807.6L1213.1 819.3M1218.3 807.6L1206.7 815.7M1218.3 807.6L1202.4 809.3M1218.3 807.6L1200.8 801.4M1218.3 807.6L1202.4 793.4M1218.3 807.6L1206.7 787.0M1218.3 807.6L1213.1 783.5M1218.3 807.6L1220.1 783.5M1218.3 807.6L1226.5 787.0M1218.3 807.6L1230.8 793.4" stroke="#828282" stroke-width="0.4" fill="none"/>
<polygon points="1254.2,591.1 1259.3,611.9 1280,632.6 1312.6,647.4 1349.6,657.8 1388.1,660.7 1405.9,656.3 1411.9,659.3 1405.9,666.7 1388.1,671.7 1350.2,668.7 1313.2,658.7 1281.5,643.9 1261.3,625.2 1254.8,605.9" fill="url(#sg2)" stroke="#8a8a8a" stroke-width="0.4" stroke-linejoin="round"/>
<polygon points="1277,549.6 1257.8,570.4 1254.2,591.1 1259.3,611.9 1280,632.6 1312.6,647.4 1349.6,657.8 1388.1,660.7 1405.9,656.3 1405.9,588.1 1328.9,528.9" fill="#bebebe" stroke="#9a9a9a" stroke-width="0.5" stroke-linejoin="round"/>
<path d="M1303.7 608.9 L1277 549.6M1303.7 608.9 L1257.8 570.4M1303.7 608.9 L1254.2 591.1M1303.7 608.9 L1259.3 611.9M1303.7 608.9 L1280 632.6M1303.7 608.9 L1312.6 647.4M1303.7 608.9 L1349.6 657.8M1303.7 608.9 L1388.1 660.7M1303.7 608.9 L1287.4 558.5M1280 632.6 L1281.5 643.9M1312.6 647.4 L1313.2 658.7M1349.6 657.8 L1350.2 668.7M1388.1 660.7 L1388.1 671.7" fill="none" stroke="#5c5c5c" stroke-width="0.5"/>
<ellipse cx="1303.7" cy="608.9" rx="6" ry="4.4" fill="#a0a0a0" transform="rotate(-10 1303.7 608.9)" stroke="#5c5c5c" stroke-width="0.6"/>
<polygon points="1483,644.4 1545.2,620.7 1543.7,674.1 1536.3,700.7 1515.6,724.4 1477,721.5 1480,685.9" fill="#b2b2b2" stroke="#999" stroke-width="0.5" stroke-linejoin="round"/>
<path d="M1484.4 651.9 L1545.2 629.6M1483.6 660.7 L1545.2 641.5M1483 669.6 L1544.6 653.3M1481.5 678.5 L1544 668.1M1480.6 688.9 L1540.7 685.9M1478.5 700.7 L1536.3 700.7" fill="none" stroke="#606060" stroke-width="0.5"/>
<polygon points="1525.9,681.5 1528,680.9 1528,694.8 1525.9,695.4" fill="#1a1a1a"/>
<polygon points="1401.5,614.8 1432.6,607.4 1459.3,631.1 1474.1,644.4 1471.1,675.6 1398.5,626.7" fill="#bebebe" stroke="#a0a0a0" stroke-width="0.5" stroke-linejoin="round"/>
<polygon points="1398.5,626.7 1471.1,675.6 1474.1,647.4 1483,644.4 1480,685.9 1474.1,718.5 1462.2,720 1397,647.4" fill="#000"/>
<polygon points="1394.1,614.8 1401.5,614.8 1398.5,647.4 1388.1,659.3" fill="#a2a2a2"/>
<path d="M1400 629.6 L1463.7 718.5M1471.1 675.6 L1468.1 718.5M1401.5 641.5 L1462.2 715.6" fill="none" stroke="#dcdcdc" stroke-width="0.45"/>
<polygon points="1278.5,487.4 1394.1,594.1 1397,611.9 1388.1,659.3 1277,546.7" fill="#000"/>
<polygon points="1278.5,485.9 1354.1,463.7 1457.8,561.5 1417.8,574.8 1416.3,588.1 1394.1,594.1" fill="#bebebe" stroke="#a8a8a8" stroke-width="0.5" stroke-linejoin="round"/>
<path d="M1278.5 485.9 L1457.8 561.5" fill="none" stroke="#5c5c5c" stroke-width="0.5"/>
<path d="M1284.4 505.2 L1388.1 656.3M1290.4 511.1 L1392.6 617.8M1278.5 543.7 L1386.7 657.8" fill="none" stroke="#dcdcdc" stroke-width="0.45"/>
<polygon points="1434.1,610.4 1477,596.4 1475.6,609.5 1457.8,616.9" fill="#b6b6b6" stroke="#8a8a8a" stroke-width="0.5" stroke-linejoin="round"/>
<path d="M1457.8 616.9 L1465.2 601.5M1468.1 614.8 L1469.6 600" fill="none" stroke="#5c5c5c" stroke-width="0.5"/>
<polygon points="1432.6,607.4 1518.5,577.8 1506.7,584.6 1435.6,611.3" fill="#000"/>
<polygon points="1431.1,591.1 1518.5,561.5 1518.5,577.8 1432.6,607.4" fill="#a2a2a2" stroke="#8a8a8a" stroke-width="0.5" stroke-linejoin="round"/>
<polygon points="1417.8,576.3 1503.7,551.1 1518.5,561.5 1431.1,591.1" fill="#bebebe" stroke="#a0a0a0" stroke-width="0.5" stroke-linejoin="round"/>
<polygon points="1394.1,594.1 1416.3,588.1 1417.8,576.3 1431.1,591.1 1432.6,607.4 1417.8,613.3 1397,611.9" fill="#0a0a0a"/>
<path d="M1395.6 595.6 L1401.5 609.5 L1406.5 594.1 L1413.3 611.3 L1419.3 591.7 L1429.6 605.9" fill="none" stroke="#e0e0e0" stroke-width="0.5"/>
<path d="M1417.8 576.3 L1518.5 561.5M1431.1 591.1 L1518.5 577.8M1453.3 565.9 L1503.7 551.1" fill="none" stroke="#5c5c5c" stroke-width="0.5"/>
<polygon points="1472.6,632.6 1560,600 1560,616.3 1545.2,620.7 1474.1,644.4" fill="#a2a2a2" stroke="#8a8a8a" stroke-width="0.5" stroke-linejoin="round"/>
<polygon points="1457.8,616.3 1545.2,588.1 1560,600 1472.6,632.6" fill="#bebebe" stroke="#a0a0a0" stroke-width="0.5" stroke-linejoin="round"/>
<polygon points="1457.8,616.3 1472.6,632.6 1474.1,644.4 1457.8,631.1" fill="#0a0a0a"/>
<path d="M1457.8 616.3 L1560 600M1472.6 632.6 L1560 616.3M1488.9 611.9 L1545.2 588.1" fill="none" stroke="#5c5c5c" stroke-width="0.5"/>
<polyline points="1420.7,739.3 1605.9,677" fill="none" stroke="#858585" stroke-width="9.6" stroke-linecap="butt" stroke-linejoin="round"/>
<polyline points="1420.7,739.3 1605.9,677" fill="none" stroke="#a6a6a6" stroke-width="6.8" stroke-linecap="butt" stroke-linejoin="round"/>
<polyline points="1420.7,739.3 1605.9,677" fill="none" stroke="#c6c6c6" stroke-width="2.25" stroke-linecap="butt" stroke-linejoin="round"/>
<polyline points="1419.9,736.912 1605.1,674.612" fill="none" stroke="#8e8e8e" stroke-width="0.5" stroke-linecap="butt" stroke-linejoin="round"/>
<polyline points="1421.56,741.859 1606.76,679.559" fill="none" stroke="#8e8e8e" stroke-width="0.5" stroke-linecap="butt" stroke-linejoin="round"/>
<polyline points="1423.78,738.264 1426.24,737.435" fill="none" stroke="#8a8a8a" stroke-width="13.8" stroke-linecap="round" stroke-linejoin="round"/>
<polyline points="1423.78,738.264 1426.24,737.435" fill="none" stroke="#a6a6a6" stroke-width="12" stroke-linecap="round" stroke-linejoin="round"/>
<polyline points="1602.82,678.036 1600.36,678.865" fill="none" stroke="#8a8a8a" stroke-width="13.8" stroke-linecap="round" stroke-linejoin="round"/>
<polyline points="1602.82,678.036 1600.36,678.865" fill="none" stroke="#a6a6a6" stroke-width="12" stroke-linecap="round" stroke-linejoin="round"/>
<ellipse cx="1518.5" cy="707.56" rx="16.15" ry="19.04" fill="#9c9c9c" transform="rotate(-20 1518.5 707.56)" stroke="#7e7e7e" stroke-width="0.6"/>
<ellipse cx="1516.46" cy="703.65" rx="10.54" ry="10.2" fill="#b4b4b4" transform="rotate(-20 1516.46 703.65)"/>
<path d="M1520.2 713.9L1534.3 707.6M1520.2 713.9L1532.7 715.5M1520.2 713.9L1528.4 721.9M1520.2 713.9L1522.0 725.5M1520.2 713.9L1515.0 725.5M1520.2 713.9L1508.6 721.9M1520.2 713.9L1504.3 715.5M1520.2 713.9L1502.7 707.6M1520.2 713.9L1504.3 699.6M1520.2 713.9L1508.6 693.2M1520.2 713.9L1515.0 689.7M1520.2 713.9L1522.0 689.7M1520.2 713.9L1528.4 693.2M1520.2 713.9L1532.7 699.6" stroke="#828282" stroke-width="0.4" fill="none"/>
<polygon points="1711.8,554.3 1769.7,535.7 1768.5,563.5 1761.6,586.7 1750,602.9 1731.5,612.1 1718.8,616.8 1703.7,623.7 1710.6,591.3" fill="#b2b2b2" stroke="#999" stroke-width="0.5" stroke-linejoin="round"/>
<path d="M1711.8 561.2 L1769.7 542.7M1711.8 568.1 L1769 551.9M1711.1 575.1 L1768.5 563.5M1710.6 582 L1765 575.1M1710.6 589 L1761.6 586.7M1708.3 600.6 L1750 602.9" fill="none" stroke="#606060" stroke-width="0.5"/>
<polygon points="1745.8,594.8 1748.1,594.1 1748.1,602.9 1745.8,603.6" fill="#1a1a1a"/>
<polygon points="1522,448.9 1699.1,586.7 1696.8,595.9 1689.8,628.3 1517.4,482.5" fill="#000"/>
<polygon points="1522,448.9 1568.3,435 1574.1,432.7 1689.8,527.6 1687.5,542.7 1700.2,549.6 1699.1,586.7" fill="#bebebe" stroke="#a8a8a8" stroke-width="0.5" stroke-linejoin="round"/>
<polyline points="1570.6,434.4 1688,530.6" fill="none" stroke="#222" stroke-width="1.4" stroke-linecap="round" stroke-linejoin="round"/>
<polyline points="1530.1,447.3 1698.6,579.7" fill="none" stroke="#9a9a9a" stroke-width="0.8" stroke-linecap="round" stroke-linejoin="round"/>
<path d="M1537 452.4 L1662 549.6M1546.3 457 L1699.1 582" fill="none" stroke="#5c5c5c" stroke-width="0.5"/>
<path d="M1522 450.1 L1689.8 627.2M1519.7 477.9 L1685.2 623.7" fill="none" stroke="#dcdcdc" stroke-width="0.45"/>
<polygon points="1687.5,531.1 1703.7,541.5 1700.2,556.6 1711.8,554.3 1710.6,591.3 1703.7,623.7 1692.1,627.2 1696.8,595.9 1699.1,582 1701.4,549.6 1687.5,542.7" fill="#000"/>
<path d="M1701.4 558.9 L1710.6 568.1 L1700.2 577.4 L1710.6 582 L1699.1 591.3M1696.8 595.9 L1691 627.2" fill="none" stroke="#e0e0e0" stroke-width="0.45"/>
<polygon points="1703.7,541.5 1782.4,514.9 1781.2,531.1 1769.7,535.7 1713,554.3 1701.4,556.6" fill="#a2a2a2" stroke="#8a8a8a" stroke-width="0.5" stroke-linejoin="round"/>
<polygon points="1689.8,527.6 1766.2,504.5 1782.4,514.9 1703.7,541.5" fill="#bebebe" stroke="#a0a0a0" stroke-width="0.5" stroke-linejoin="round"/>
<path d="M1689.8 527.6 L1782.4 514.9M1703.7 541.5 L1781.2 531.1M1708.3 521.9 L1766.2 504.5" fill="none" stroke="#5c5c5c" stroke-width="0.5"/>
<polyline points="1652.8,645.7 1819.4,590.1" fill="none" stroke="#858585" stroke-width="9.1" stroke-linecap="butt" stroke-linejoin="round"/>
<polyline points="1652.8,645.7 1819.4,590.1" fill="none" stroke="#a6a6a6" stroke-width="6.3" stroke-linecap="butt" stroke-linejoin="round"/>
<polyline points="1652.8,645.7 1819.4,590.1" fill="none" stroke="#c6c6c6" stroke-width="2.125" stroke-linecap="butt" stroke-linejoin="round"/>
<polyline points="1652.05,643.442 1818.65,587.842" fill="none" stroke="#8e8e8e" stroke-width="0.5" stroke-linecap="butt" stroke-linejoin="round"/>
<polyline points="1653.61,648.119 1820.21,592.519" fill="none" stroke="#8e8e8e" stroke-width="0.5" stroke-linecap="butt" stroke-linejoin="round"/>
<polyline points="1655.65,644.75 1657.92,643.991" fill="none" stroke="#8a8a8a" stroke-width="12.8" stroke-linecap="round" stroke-linejoin="round"/>
<polyline points="1655.65,644.75 1657.92,643.991" fill="none" stroke="#a6a6a6" stroke-width="11" stroke-linecap="round" stroke-linejoin="round"/>
<polyline points="1816.55,591.05 1814.28,591.809" fill="none" stroke="#8a8a8a" stroke-width="12.8" stroke-linecap="round" stroke-linejoin="round"/>
<polyline points="1816.55,591.05 1814.28,591.809" fill="none" stroke="#a6a6a6" stroke-width="11" stroke-linecap="round" stroke-linejoin="round"/>
<ellipse cx="1740.7" cy="617.3" rx="14.25" ry="16.8" fill="#9c9c9c" transform="rotate(-20 1740.7 617.3)" stroke="#7e7e7e" stroke-width="0.6"/>
<ellipse cx="1738.9" cy="613.85" rx="9.3" ry="9" fill="#b4b4b4" transform="rotate(-20 1738.9 613.85)"/>
<path d="M1742.2 622.9L1754.7 617.3M1742.2 622.9L1753.3 624.3M1742.2 622.9L1749.4 630.0M1742.2 622.9L1743.8 633.1M1742.2 622.9L1737.6 633.1M1742.2 622.9L1732.0 630.0M1742.2 622.9L1728.1 624.3M1742.2 622.9L1726.8 617.3M1742.2 622.9L1728.1 610.3M1742.2 622.9L1732.0 604.6M1742.2 622.9L1737.6 601.5M1742.2 622.9L1743.8 601.5M1742.2 622.9L1749.4 604.6M1742.2 622.9L1753.3 610.3" stroke="#828282" stroke-width="0.4" fill="none"/>
<g font-size="11" fill="#dcdcdc"><text y="65"><tspan x="5.3" textLength="18.5" lengthAdjust="spacing">[+]</tspan> <tspan x="27.5" textLength="66.5" lengthAdjust="spacing">[Perspective ]</tspan> <tspan x="98.8" textLength="54.5" lengthAdjust="spacing">[Standard ]</tspan> <tspan x="157.5" textLength="71" lengthAdjust="spacing">[Edged Faces ]</tspan></text></g>
<g font-size="11" fill="#e9cf1c"><text x="55.8" y="95.5">Total</text><text x="15.5" y="111.7">Polys:</text><text x="55.8" y="111.7">10 429</text><text x="125.6" y="111.7">0</text><text x="15.5" y="127.7">Tris:</text><text x="55.8" y="127.7">10 429</text><text x="125.6" y="127.7">0</text><text x="15.5" y="143.7">Verts:</text><text x="55.8" y="143.7">5 494</text><text x="125.6" y="143.7">0</text><text x="15.5" y="175.6">FPS:</text><text x="55.8" y="175.6">Inactive</text></g>
<g><ellipse cx="1863.5" cy="119.5" rx="34.5" ry="21.5" fill="#848a90"/><ellipse cx="1863.5" cy="118.3" rx="27" ry="15.8" fill="#1b1b1b"/><ellipse cx="1863.5" cy="119.5" rx="34.5" ry="21.5" fill="none" stroke="#6e747a" stroke-width="0.8"/><polygon points="1845.4,87.8 1869,81.3 1882.4,95.6 1857.9,100.7" fill="#8f8f8f"/><polygon points="1845.4,87.8 1857.9,100.7 1856.5,124.8 1848.1,111.9" fill="#858585"/><polygon points="1857.9,100.7 1882.4,95.6 1881.5,116.5 1856.5,124.8" fill="#8b8b8b"/><text x="1864" y="113" font-size="6.5" fill="#777" transform="rotate(-14 1870 111)">LEFT</text><text x="1861" y="92" font-size="6" fill="#777" transform="rotate(60 1864 90)">TOP</text><text x="1829" y="128" font-size="7" fill="#c8c8c8" transform="rotate(20 1832 126)">W</text><text x="1890" y="108" font-size="7" fill="#c8c8c8" transform="rotate(-25 1892 106)">S</text><text x="1878" y="140" font-size="7" fill="#c8c8c8" transform="rotate(-20 1880 138)">N</text></g>
<g fill="#f2f2f2" font-weight="bold"><rect x="10.8" y="1015.8" width="169.2" height="55.4" fill="none" stroke="#f2f2f2" stroke-width="3.8"/><text x="18.8" y="1039.4" font-size="24.4" textLength="155.6" lengthAdjust="spacingAndGlyphs">ABANDONED</text><text x="45.6" y="1065" font-size="27.9" textLength="100" lengthAdjust="spacingAndGlyphs">WORLD</text><rect x="21.2" y="1052" width="15" height="5"/><rect x="154.4" y="1052" width="15" height="5"/></g>
<g stroke-width="1" fill="none"><path d="M26.2 1052V1029" stroke="#1a1ae6"/><path d="M26.2 1052L17.5 1037" stroke="#e01a1a"/><path d="M26.2 1052L8 1057" stroke="#18c018"/></g><g font-size="8"><text x="27" y="1032" fill="#3a3af0">z</text><text x="15" y="1037" fill="#e01a1a">x</text><text x="4" y="1060" fill="#18c018">y</text></g>
</g>
</svg>
</div>
</body></html>
